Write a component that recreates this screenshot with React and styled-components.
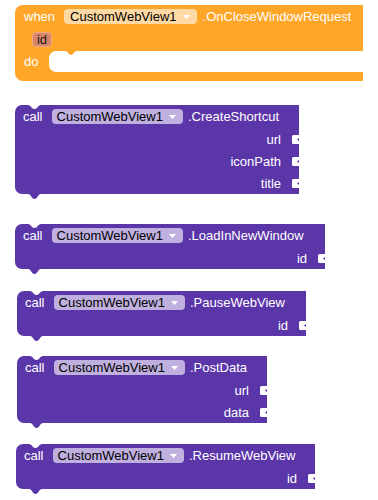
import React from "react";
import styled, { createGlobalStyle } from "styled-components";

const Global = createGlobalStyle`
  html, body { margin: 0; padding: 0; background: #fff; }
  body { font-family: "Liberation Sans", Arial, sans-serif; }
`;

const ORANGE = "#FFA629";
const PURPLE = "#5B36A9";

const Workspace = styled.div`
  width: 378px;
  height: 500px;
  overflow: hidden;
  box-sizing: border-box;
  padding-top: 5px;
  display: flex;
  flex-direction: column;
  align-items: flex-start;
  background: #fff;
`;

const EventBlock = styled.div`
  margin-left: 15px;
  width: 348px;
  background: ${ORANGE};
  border-radius: 8px 0 0 8px;
  display: flex;
  flex-direction: column;
`;

const HeaderRow = styled.div`
  display: flex;
  align-items: center;
  height: 23px;
  padding-left: ${(p) => p.$pad}px;
`;

const Label = styled.span`
  color: #fff;
  font-size: 13px;
  line-height: 15px;
  white-space: nowrap;
  margin-left: ${(p) => p.$ml || 0}px;
`;

const Field = styled.span`
  display: inline-flex;
  align-items: center;
  height: 15px;
  padding: 0 7px 0 ${(p) => p.$pl}px;
  margin-left: ${(p) => p.$ml}px;
  border-radius: 4px;
  background: ${(p) => p.$bg};
  color: #000;
  font-size: 13px;
  line-height: 15px;
  white-space: nowrap;
`;

const ArrowIcon = styled.svg`
  margin-left: 6px;
  display: block;
`;

const ParamRow = styled.div`
  display: flex;
  align-items: center;
  height: 23px;
  padding-left: 17px;
`;

const ParamChip = styled.span`
  display: inline-flex;
  align-items: center;
  justify-content: center;
  box-sizing: border-box;
  width: 20px;
  height: 15px;
  border-radius: 4px;
  background: #d8866a;
  border: 1px solid #eda98a;
  color: #1a1a1a;
  font-size: 13px;
  line-height: 13px;
`;

const DoRow = styled.div`
  display: flex;
  height: 21px;
`;

const DoLabel = styled.div`
  width: 34px;
  box-sizing: border-box;
  padding-left: 9px;
  display: flex;
  align-items: center;
  color: #fff;
  font-size: 13px;
`;

const Slot = styled.div`
  flex: 1;
  background: #fff;
  border-radius: 7px 0 0 7px;
  position: relative;
`;

const SlotNotch = styled.svg`
  position: absolute;
  top: 0;
  left: 16px;
  display: block;
`;

const BottomArm = styled.div`
  height: 9px;
`;

const CallBlock = styled.div`
  position: relative;
  margin-left: ${(p) => p.$x}px;
  margin-top: ${(p) => p.$mt}px;
  width: ${(p) => p.$w}px;
  background: ${PURPLE};
  border-radius: 7px 0 0 7px;
  display: flex;
  flex-direction: column;
`;

const TopNotch = styled.svg`
  position: absolute;
  top: 0;
  left: 13px;
  display: block;
`;

const BottomTab = styled.svg`
  position: absolute;
  bottom: -5px;
  left: 13px;
  display: block;
`;

const InputRow = styled.div`
  position: relative;
  display: flex;
  align-items: center;
  justify-content: flex-end;
  height: 22px;
  padding-right: 18px;
`;

const Socket = styled.svg`
  position: absolute;
  right: 0;
  top: 7px;
  display: block;
`;

const Arrow = ({ color }) => (
  <ArrowIcon width="7" height="4" viewBox="0 0 7 4">
    <path d="M0,0 L7,0 L3.5,4 Z" fill={color} />
  </ArrowIcon>
);

const SocketShape = () => (
  <Socket width="7" height="9" viewBox="0 0 7 9">
    <path
      d="M7,0 L1.5,0 Q0,0 0,1.5 L0,7.5 Q0,9 1.5,9 L7,9 L7,6 L5,4.5 L7,3 Z"
      fill="#fff"
    />
  </Socket>
);

const blocks = [
  { name: ".CreateShortcut", x: 15, mt: 24, w: 284, params: ["url", "iconPath", "title"] },
  { name: ".LoadInNewWindow", x: 15, mt: 30, w: 310, params: ["id"] },
  { name: ".PauseWebView", x: 17, mt: 22, w: 289, params: ["id"] },
  { name: ".PostData", x: 17, mt: 20, w: 250, params: ["url", "data"] },
  { name: ".ResumeWebView", x: 16, mt: 21, w: 299, params: ["id"] },
];

export default function App() {
  return (
    <>
      <Global />
      <Workspace>
        <EventBlock>
          <HeaderRow $pad={9}>
            <Label>when</Label>
            <Field $bg="#FFD9A3" $pl={6} $ml={9}>
              CustomWebView1
              <Arrow color="#ffffff" />
            </Field>
            <Label $ml={6}>.OnCloseWindowRequest</Label>
          </HeaderRow>
          <ParamRow>
            <ParamChip>id</ParamChip>
          </ParamRow>
          <DoRow>
            <DoLabel>do</DoLabel>
            <Slot>
              <SlotNotch width="12" height="4" viewBox="0 0 12 4">
                <path d="M0,0 C3,0 3.5,4 6,4 C8.5,4 9,0 12,0 Z" fill={ORANGE} />
              </SlotNotch>
            </Slot>
          </DoRow>
          <BottomArm />
        </EventBlock>

        {blocks.map((b) => (
          <CallBlock key={b.name} $x={b.x} $mt={b.mt} $w={b.w}>
            <TopNotch width="13" height="4" viewBox="0 0 13 4">
              <path d="M0,0 C3,0 3.5,4 6.5,4 C9.5,4 10,0 13,0 Z" fill="#fff" />
            </TopNotch>
            <HeaderRow $pad={8}>
              <Label>call</Label>
              <Field $bg="#BFB0DF" $pl={5} $ml={9}>
                CustomWebView1
                <Arrow color="#ffffff" />
              </Field>
              <Label $ml={5}>{b.name}</Label>
            </HeaderRow>
            {b.params.map((p) => (
              <InputRow key={p}>
                <Label>{p}</Label>
                <SocketShape />
              </InputRow>
            ))}
            <BottomTab width="13" height="5" viewBox="0 0 13 5">
              <path d="M0,0 C3,0 3.5,5 6.5,5 C9.5,5 10,0 13,0 Z" fill={PURPLE} />
            </BottomTab>
          </CallBlock>
        ))}
      </Workspace>
    </>
  );
}
